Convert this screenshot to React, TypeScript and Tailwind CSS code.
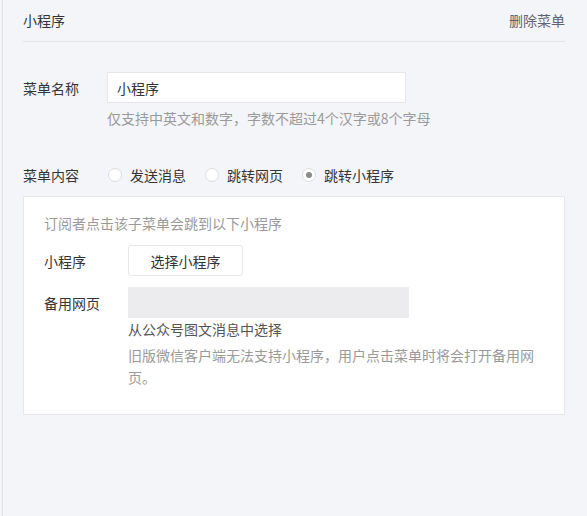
import React from 'react'

const font = { fontFamily: '"Microsoft YaHei", "Noto Sans CJK SC", "Liberation Sans", sans-serif' }

type RadioProps = { label: string; checked?: boolean }

const Radio = ({ label, checked }: RadioProps) => (
  <label className="flex items-center gap-[8px] mr-[19px]">
    <span className="w-[14px] h-[14px] rounded-full border border-[#dcdde1] bg-white flex items-center justify-center">
      {checked && <span className="w-[6px] h-[6px] rounded-full bg-[#8a8a8a]" />}
    </span>
    <span>{label}</span>
  </label>
)

const App = () => {
  return (
    <div className="w-[587px] h-[516px] bg-[#f4f5f9] pl-[2px] overflow-hidden" style={font}>
      <div className="h-full border-l border-[#e2e3e7] pl-[20px] pr-[22px] text-[14px] leading-[20px] text-[#353535]">
        {/* Header */}
        <div className="h-[42px] flex items-center justify-between border-b border-[#e3e4e8] pb-[1px]">
          <span>小程序</span>
          <span className="text-[#5f6373]">删除菜单</span>
        </div>

        {/* Menu name */}
        <div className="mt-[30px] flex items-center">
          <span className="w-[84px]">菜单名称</span>
          <div className="w-[299px] h-[31px] border border-[#e7e7eb] bg-white flex items-center px-[9px]">
            小程序
          </div>
        </div>
        <p className="mt-[5px] pl-[84px] text-[#9a9a9a]">仅支持中英文和数字，字数不超过4个汉字或8个字母</p>

        {/* Menu content */}
        <div className="mt-[37px] flex items-center">
          <span className="w-[85px]">菜单内容</span>
          <Radio label="发送消息" />
          <Radio label="跳转网页" />
          <Radio label="跳转小程序" checked />
        </div>

        <div className="mt-[11px] w-[542px] h-[219px] bg-white border border-[#e7e7eb] pt-[16px] pl-[20px] pr-[20px]">
          <p className="text-[#9a9a9a]">订阅者点击该子菜单会跳到以下小程序</p>

          <div className="mt-[12px] flex items-center">
            <span className="w-[84px]">小程序</span>
            <button className="w-[115px] h-[31px] border border-[#e7e7eb] rounded-[3px] bg-white text-[#353535]">
              选择小程序
            </button>
          </div>

          <div className="mt-[11px] flex items-center">
            <span className="w-[84px]">备用网页</span>
            <div className="w-[281px] h-[31px] bg-[#ececee]" />
          </div>

          <div className="pl-[84px]">
            <p className="mt-[1px] text-[#555]">从公众号图文消息中选择</p>
            <p className="mt-[5px] leading-[22px] text-[#9a9a9a] w-[418px]">
              旧版微信客户端无法支持小程序，用户点击菜单时将会打开备用网页。
            </p>
          </div>
        </div>
      </div>
    </div>
  )
}

export default App
